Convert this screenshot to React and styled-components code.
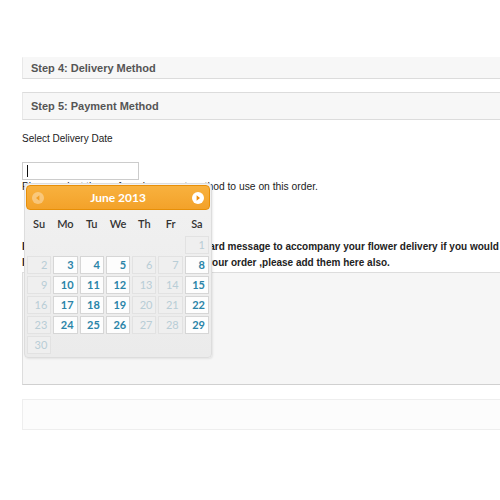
import React from "react";
import styled, { createGlobalStyle } from "styled-components";

const GlobalStyle = createGlobalStyle`
  html, body {
    margin: 0;
    padding: 0;
    background: #ffffff;
    font-family: "Liberation Sans", Arial, sans-serif;
  }
`;

const Page = styled.div`
  width: 500px;
  height: 500px;
  overflow: hidden;
  padding: 57px 0 0 22px;
  box-sizing: border-box;
`;

const StepPanel = styled.div`
  margin-top: ${(p) => p.$gap || 0}px;
  margin-right: -20px;
  height: ${(p) => p.$height}px;
  box-sizing: border-box;
  display: flex;
  align-items: center;
  padding-left: 8px;
  background: #f7f7f7;
  border-top: 1px solid ${(p) => (p.$top ? "#dcdcdc" : "transparent")};
  border-bottom: 1px solid #dcdcdc;
  border-left: 1px solid #e8e8e8;
  font-size: 11px;
  font-weight: bold;
  color: #555555;
`;

const Label = styled.div`
  margin-top: 12px;
  font-size: 10px;
  line-height: 14px;
  color: #222222;
`;

const DateField = styled.div`
  position: relative;
  margin-top: 16px;
`;

const Input = styled.div`
  width: 117px;
  height: 18px;
  box-sizing: border-box;
  border: 1px solid #cccccc;
  background: #ffffff;
  display: flex;
  align-items: center;
  padding-left: 4px;
`;

const Caret = styled.span`
  width: 1px;
  height: 12px;
  background: #111111;
`;

const Note = styled.div`
  font-size: 10.3px;
  line-height: 14px;
  color: #222222;
  white-space: nowrap;
`;

const BoldNote = styled.div`
  margin-top: 45px;
  font-size: 10px;
  line-height: 16px;
  font-weight: bold;
  color: #222222;
  white-space: nowrap;
`;

const MessageBox = styled.div`
  margin-top: 1px;
  margin-right: -20px;
  height: 113px;
  box-sizing: border-box;
  background: #f6f6f6;
  border: 1px solid #dddddd;
  border-bottom-color: #d0d0d0;
`;

const EmptyPanel = styled.div`
  margin-top: 14px;
  margin-right: -20px;
  height: 31px;
  box-sizing: border-box;
  background: #fcfcfc;
  border: 1px solid #eeeeee;
`;

/* datepicker popup */

const Calendar = styled.div`
  position: absolute;
  left: 2px;
  top: 21px;
  width: 188px;
  height: 175px;
  box-sizing: border-box;
  padding: 1px;
  border: 1px solid #dddddd;
  border-radius: 4px;
  background: linear-gradient(#f1f1f1, #ebebeb);
  box-shadow: 1px 1px 2px rgba(0, 0, 0, 0.08);
  font-family: Lato, "Open Sans", sans-serif;
  z-index: 2;
`;

const CalHeader = styled.div`
  height: 25px;
  box-sizing: border-box;
  border: 1px solid #e78f08;
  border-radius: 4px;
  background: linear-gradient(#f8b13e, #f3a22a);
  display: flex;
  align-items: center;
  justify-content: space-between;
  padding: 0 5px;
`;

const Title = styled.span`
  color: #ffffff;
  font-weight: bold;
  font-size: 12px;
`;

const NavIcon = ({ dir, faded }) => (
  <svg width="12" height="12" viewBox="0 0 12 12" style={{ opacity: faded ? 0.35 : 1 }}>
    <circle cx="6" cy="6" r="6" fill="#ffffff" />
    {dir === "next" ? (
      <path d="M4.6 3.2 L8 6 L4.6 8.8 Z" fill="#ef8c08" />
    ) : (
      <path d="M7.4 3.2 L4 6 L7.4 8.8 Z" fill="#ef8c08" />
    )}
  </svg>
);

const Grid = styled.div`
  display: grid;
  grid-template-columns: repeat(7, 1fr);
  column-gap: 2px;
  padding: 0 1px;
`;

const DayName = styled.div`
  height: 26px;
  display: flex;
  align-items: center;
  justify-content: center;
  font-size: 11px;
  font-weight: 600;
  color: #333333;
`;

const Cell = styled.div`
  height: 18px;
  margin-bottom: 2px;
  box-sizing: border-box;
  text-align: right;
  padding-right: 3px;
  font-size: 11px;
  line-height: 16px;
  font-weight: ${(p) => (p.$off ? "normal" : "bold")};
  border: 1px solid ${(p) => (p.$off ? "#e2e2e2" : "#d6d6d6")};
  background: ${(p) => (p.$off ? "#efefef" : "#fdfdfd")};
  color: ${(p) => (p.$off ? "#b8cdd6" : "#2a84a8")};
`;

const Blank = styled.div`
  height: 18px;
  margin-bottom: 2px;
`;

const dayNames = ["Su", "Mo", "Tu", "We", "Th", "Fr", "Sa"];
const disabledCols = [0, 4, 5];

const DatePicker = () => {
  const cells = [];
  for (let i = 0; i < 6; i++) cells.push(<Blank key={"b" + i} />);
  for (let d = 1; d <= 30; d++) {
    const col = (d + 5) % 7;
    const off = d === 1 || disabledCols.includes(col);
    cells.push(
      <Cell key={d} $off={off}>
        {d}
      </Cell>
    );
  }
  return (
    <Calendar>
      <CalHeader>
        <NavIcon dir="prev" faded />
        <Title>June 2013</Title>
        <NavIcon dir="next" />
      </CalHeader>
      <Grid>
        {dayNames.map((n) => (
          <DayName key={n}>{n}</DayName>
        ))}
        {cells}
      </Grid>
    </Calendar>
  );
};

const App = () => {
  return (
    <>
      <GlobalStyle />
      <Page>
        <StepPanel $height={22}>Step 4: Delivery Method</StepPanel>
        <StepPanel $height={28} $gap={13} $top>
          Step 5: Payment Method
        </StepPanel>
        <Label>Select Delivery Date</Label>
        <DateField>
          <Input>
            <Caret />
          </Input>
          <DatePicker />
        </DateField>
        <Note>Please select the preferred payment method to use on this order.</Note>
        <BoldNote>
          If you would like to include a brief gift card message to accompany your flower delivery if you would like
          <br />
          like to include useful instructions with your order ,please add them here also.
        </BoldNote>
        <MessageBox />
        <EmptyPanel />
      </Page>
    </>
  );
};

export default App;
